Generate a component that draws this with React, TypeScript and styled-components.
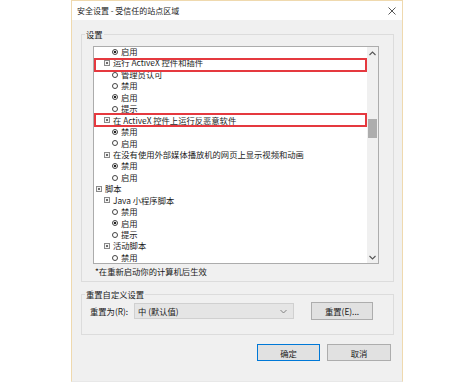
import styled, { createGlobalStyle } from "styled-components";

const GlobalStyle = createGlobalStyle`
   html, body {
      margin: 0;
      padding: 0;
      background: #ffffff;
   }
   body {
      font-family: "Noto Sans CJK SC", "Liberation Sans", sans-serif;
      color: #1a1a1a;
   }
`;

type Row = {
   kind: "radio" | "group";
   level: number;
   text: string;
   checked?: boolean;
};

const rows: Row[] = [
   { kind: "radio", level: 2, text: "启用", checked: true },
   { kind: "group", level: 1, text: "运行 ActiveX 控件和插件" },
   { kind: "radio", level: 2, text: "管理员认可" },
   { kind: "radio", level: 2, text: "禁用" },
   { kind: "radio", level: 2, text: "启用", checked: true },
   { kind: "radio", level: 2, text: "提示" },
   { kind: "group", level: 1, text: "在 ActiveX 控件上运行反恶意软件" },
   { kind: "radio", level: 2, text: "禁用", checked: true },
   { kind: "radio", level: 2, text: "启用" },
   { kind: "group", level: 1, text: "在没有使用外部媒体播放机的网页上显示视频和动画" },
   { kind: "radio", level: 2, text: "禁用", checked: true },
   { kind: "radio", level: 2, text: "启用" },
   { kind: "group", level: 0, text: "脚本" },
   { kind: "group", level: 1, text: "Java 小程序脚本" },
   { kind: "radio", level: 2, text: "禁用" },
   { kind: "radio", level: 2, text: "启用", checked: true },
   { kind: "radio", level: 2, text: "提示" },
   { kind: "group", level: 1, text: "活动脚本" },
   { kind: "radio", level: 2, text: "禁用" },
];

const indent = [2, 10, 18];

// red annotation frames drawn over the list (top offsets inside the list box)
const highlights = [11, 66];

function SettingIcon() {
   return (
      <svg width="6" height="6" viewBox="0 0 6 6">
         <rect x="0.5" y="0.5" width="5" height="5" fill="#f4f4f4" stroke="#8a8a8a" />
         <rect x="2" y="2" width="2" height="2" fill="#6d6d6d" />
      </svg>
   );
}

export default function App() {
   return (
      <>
         <GlobalStyle />
         <Window>
            <TitleBar>
               <Title>安全设置 - 受信任的站点区域</Title>
               <Close>
                  <svg width="8" height="8" viewBox="0 0 8 8">
                     <path d="M0.5 0.5 L7.5 7.5 M7.5 0.5 L0.5 7.5" stroke="#444" strokeWidth="0.9" />
                  </svg>
               </Close>
            </TitleBar>
            <Body>
               <Group>
                  <Legend>设置</Legend>
                  <ListBox>
                     <ListContent>
                        {rows.map((row, i) => (
                           <ListRow key={i} $indent={indent[row.level]}>
                              {row.kind === "radio" ? (
                                 <Radio $checked={!!row.checked} />
                              ) : (
                                 <IconSlot>
                                    <SettingIcon />
                                 </IconSlot>
                              )}
                              <span>{row.text}</span>
                           </ListRow>
                        ))}
                     </ListContent>
                     <Scrollbar>
                        <ScrollArrow>
                           <svg width="7" height="5" viewBox="0 0 7 5">
                              <path d="M0.5 4 L3.5 1 L6.5 4" fill="none" stroke="#555" strokeWidth="1.1" />
                           </svg>
                        </ScrollArrow>
                        <Track>
                           <Thumb />
                        </Track>
                        <ScrollArrow>
                           <svg width="7" height="5" viewBox="0 0 7 5">
                              <path d="M0.5 1 L3.5 4 L6.5 1" fill="none" stroke="#555" strokeWidth="1.1" />
                           </svg>
                        </ScrollArrow>
                     </Scrollbar>
                     {highlights.map((top) => (
                        <Highlight key={top} $top={top} />
                     ))}
                  </ListBox>
                  <Note>*在重新启动你的计算机后生效</Note>
               </Group>

               <ResetGroup>
                  <Legend>重置自定义设置</Legend>
                  <ResetRow>
                     <ResetLabel>重置为(R):</ResetLabel>
                     <Select>
                        <span>中 (默认值)</span>
                        <svg width="7" height="5" viewBox="0 0 7 5">
                           <path d="M0.5 1 L3.5 4 L6.5 1" fill="none" stroke="#777" strokeWidth="0.9" />
                        </svg>
                     </Select>
                     <Button $width={62} $height={18}>重置(E)...</Button>
                  </ResetRow>
               </ResetGroup>

               <Footer>
                  <Button $primary $width={63} $height={17}>确定</Button>
                  <Button $width={64} $height={17}>取消</Button>
               </Footer>
            </Body>
         </Window>
      </>
   );
}

const Window = styled.div`
   margin-left: 71px;
   width: 330px;
   height: 380px;
   border: 1px solid #efd9ae;
   border-bottom-color: #e8e8e8;
   display: flex;
   flex-direction: column;
   background: #f0f0f0;
`;

const TitleBar = styled.div`
   height: 19px;
   background: #ffffff;
   display: flex;
   align-items: center;
   justify-content: space-between;
   padding: 0 6px 0 5px;
`;

const Title = styled.div`
   font-size: 8px;
   color: #1c1c1c;
   line-height: 10px;
   padding-top: 1px;
`;

const Close = styled.div`
   width: 8px;
   height: 8px;
   display: flex;
   margin-top: 1px;
`;

const Body = styled.div`
   flex: 1;
   padding: 8px 8px 0 9px;
   display: flex;
   flex-direction: column;
`;

const Group = styled.fieldset`
   margin: 0;
   padding: 0 14px 4px 3px;
   border: 1px solid #dcdcdc;
   min-width: 0;
`;

const Legend = styled.legend`
   padding: 0 1px;
   font-size: 8.3px;
   line-height: 12px;
   color: #1a1a1a;
`;

const ListBox = styled.div`
   position: relative;
   margin: 6px 0 0 8px;
   width: 284px;
   height: 216px;
   border: 1px solid #acacac;
   background: #ffffff;
   display: flex;
   overflow: hidden;
`;

const ListContent = styled.div`
   flex: 1;
   margin-top: -1px;
   font-size: 8.3px;
`;

const ListRow = styled.div<{ $indent: number }>`
   height: 11.45px;
   display: flex;
   align-items: center;
   gap: 3px;
   padding-left: ${(p) => p.$indent}px;
   white-space: nowrap;
   line-height: 11.45px;
   color: #1a1a1a;
`;

const IconSlot = styled.span`
   display: flex;
   width: 6px;
   height: 6px;
`;

const Radio = styled.span<{ $checked: boolean }>`
   box-sizing: border-box;
   width: 6px;
   height: 6px;
   border-radius: 50%;
   border: 1px solid #444;
   background: ${(p) =>
      p.$checked ? "radial-gradient(circle, #222 0 1.3px, #fff 1.6px)" : "#fff"};
`;

const Scrollbar = styled.div`
   width: 11px;
   background: #f0f0f0;
   display: flex;
   flex-direction: column;
`;

const ScrollArrow = styled.div`
   height: 12px;
   display: flex;
   align-items: center;
   justify-content: center;
`;

const Track = styled.div`
   flex: 1;
   padding-top: 60px;
`;

const Thumb = styled.div`
   height: 19px;
   margin: 0 1px;
   background: #adadad;
`;

const Highlight = styled.div<{ $top: number }>`
   position: absolute;
   left: 0;
   top: ${(p) => p.$top}px;
   width: 269px;
   height: 10px;
   border: 2px solid #e5393f;
   pointer-events: none;
`;

const Note = styled.div`
   font-size: 8.3px;
   line-height: 12px;
   padding: 1px 0 0 10px;
   color: #1a1a1a;
`;

const ResetGroup = styled(Group)`
   margin-top: 6px;
   padding: 0 8px 14px 3px;
`;

const ResetRow = styled.div`
   margin-top: 2px;
   height: 18px;
   display: flex;
   align-items: center;
`;

const ResetLabel = styled.div`
   width: 49px;
   padding-left: 5px;
   box-sizing: border-box;
   font-size: 8.3px;
   color: #1a1a1a;
`;

const Select = styled.div`
   box-sizing: border-box;
   width: 160px;
   height: 16px;
   margin-right: 17px;
   padding: 0 6px 0 3px;
   background: #e5e5e5;
   border: 1px solid #d0d0d0;
   display: flex;
   align-items: center;
   justify-content: space-between;
   font-size: 8.3px;
   color: #1a1a1a;
`;

const Button = styled.div<{ $primary?: boolean; $width: number; $height: number }>`
   box-sizing: border-box;
   width: ${(p) => p.$width}px;
   height: ${(p) => p.$height}px;
   background: #e1e1e1;
   border: 1px solid ${(p) => (p.$primary ? "#0078d7" : "#adadad")};
   display: flex;
   align-items: center;
   justify-content: center;
   font-size: 8.3px;
   color: #1a1a1a;
`;

const Footer = styled.div`
   margin-top: 9px;
   padding-right: 3px;
   display: flex;
   justify-content: flex-end;
   gap: 7px;
`;
